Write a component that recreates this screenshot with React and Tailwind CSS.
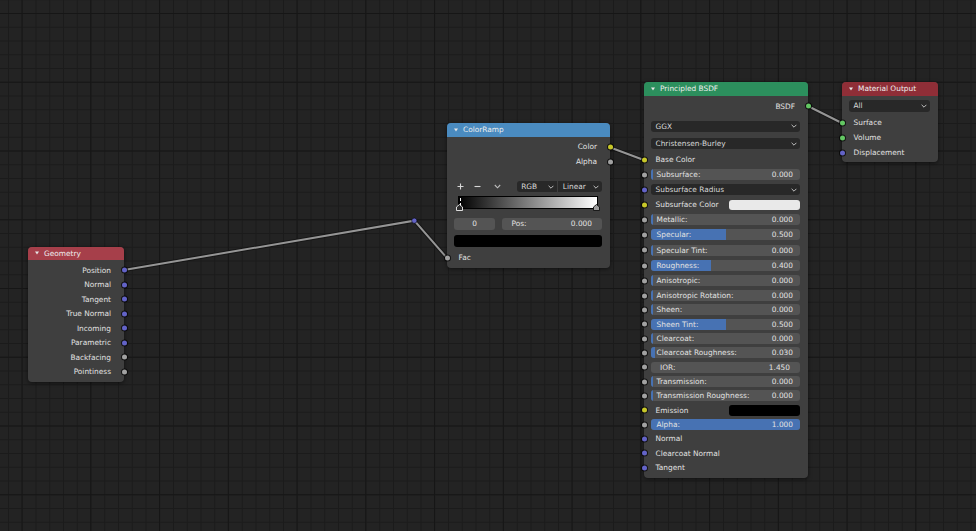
import React from 'react';

// socket colours used by Blender's node editor
const socketColor = {
  vector: 'bg-[#6363c7]',
  float: 'bg-[#a1a1a1]',
  color: 'bg-[#c7c729]',
  shader: 'bg-[#63c763]',
};

const Socket = ({ type, side }) => (
  <span
    className={`absolute top-1/2 -translate-y-1/2 w-[5px] h-[5px] rounded-full ring-1 ring-black/70 ${socketColor[type]} ${
      side === 'left' ? 'left-[-2.5px]' : 'right-[-2.5px]'
    }`}
  />
);

const Chevron = () => (
  <svg width="6" height="4" viewBox="0 0 6 4" className="shrink-0">
    <path d="M0.6 0.8 L3 3.2 L5.4 0.8" stroke="#d0d0d0" strokeWidth="0.9" fill="none" />
  </svg>
);

const Header = ({ color, title }) => (
  <div className={`h-[13.5px] rounded-t-[4px] flex items-center pl-[7px] text-[#eeeeee] ${color}`}>
    <svg width="4" height="4" viewBox="0 0 4 4" className="shrink-0">
      <path d="M0 0.6 H4 L2 3.4 Z" fill="#e6e6e6" />
    </svg>
    <span className="ml-[5px]">{title}</span>
  </div>
);

const Node = ({ pos, children }) => (
  <div
    className={`absolute rounded-[4px] bg-[#3f3f3f] shadow-[0_1px_4px_rgba(0,0,0,0.55)] font-['DejaVu_Sans',sans-serif] text-[7.4px] leading-none text-[#e2e2e2] ${pos}`}
  >
    {children}
  </div>
);

const OutRow = ({ label, type, h = 'h-[15px]' }) => (
  <div className={`relative flex items-center justify-end pr-[13px] ${h}`}>
    <span>{label}</span>
    <Socket type={type} side="right" />
  </div>
);

const Dropdown = ({ label, className = '' }) => (
  <div className={`flex items-center bg-[#282828] rounded-[3px] pl-[4.5px] pr-[3px] text-[#d8d8d8] ${className}`}>
    <span>{label}</span>
    <span className="ml-auto">
      <Chevron />
    </span>
  </div>
);

const Slider = ({ label, value, frac, ior }) => (
  <div className="relative h-[11px] w-full rounded-[3px] bg-[#545454] overflow-hidden flex items-center">
    {!ior && (
      <div
        className="absolute left-0 top-0 bottom-0 bg-[#4772b3]"
        style={{ width: frac === 0 ? '1.5px' : `${frac * 100}%` }}
      />
    )}
    <span className={`relative ${ior ? 'pl-[9px]' : 'pl-[5.5px]'}`}>{label}</span>
    <span className={`relative ml-auto ${ior ? 'pr-[10px]' : 'pr-[7px]'}`}>{value}</span>
  </div>
);

const geometryOutputs = [
  ['Position', 'vector'],
  ['Normal', 'vector'],
  ['Tangent', 'vector'],
  ['True Normal', 'vector'],
  ['Incoming', 'vector'],
  ['Parametric', 'vector'],
  ['Backfacing', 'float'],
  ['Pointiness', 'float'],
];

const bsdfInputs = [
  { label: 'Base Color', kind: 'plain', socket: 'color', h: 'h-[15px]' },
  { label: 'Subsurface:', kind: 'slider', value: '0.000', frac: 0, socket: 'float', h: 'h-[15px]' },
  { label: 'Subsurface Radius', kind: 'dropdown', socket: 'vector', h: 'h-[15px]' },
  { label: 'Subsurface Color', kind: 'swatch', swatch: 'bg-[#e9e9e9]', socket: 'color', h: 'h-[15px]' },
  { label: 'Metallic:', kind: 'slider', value: '0.000', frac: 0, socket: 'float', h: 'h-[15px]' },
  { label: 'Specular:', kind: 'slider', value: '0.500', frac: 0.5, socket: 'float', h: 'h-[15px]' },
  { label: 'Specular Tint:', kind: 'slider', value: '0.000', frac: 0, socket: 'float', h: 'h-[15.5px]' },
  { label: 'Roughness:', kind: 'slider', value: '0.400', frac: 0.4, socket: 'float', h: 'h-[15.5px]' },
  { label: 'Anisotropic:', kind: 'slider', value: '0.000', frac: 0, socket: 'float', h: 'h-[15px]' },
  { label: 'Anisotropic Rotation:', kind: 'slider', value: '0.000', frac: 0, socket: 'float', h: 'h-[14.33px]' },
  { label: 'Sheen:', kind: 'slider', value: '0.000', frac: 0, socket: 'float', h: 'h-[14.33px]' },
  { label: 'Sheen Tint:', kind: 'slider', value: '0.500', frac: 0.5, socket: 'float', h: 'h-[14.33px]' },
  { label: 'Clearcoat:', kind: 'slider', value: '0.000', frac: 0, socket: 'float', h: 'h-[14.33px]' },
  { label: 'Clearcoat Roughness:', kind: 'slider', value: '0.030', frac: 0.03, socket: 'float', h: 'h-[14.33px]' },
  { label: 'IOR:', kind: 'slider', value: '1.450', ior: true, socket: 'float', h: 'h-[14.33px]' },
  { label: 'Transmission:', kind: 'slider', value: '0.000', frac: 0, socket: 'float', h: 'h-[14.33px]' },
  { label: 'Transmission Roughness:', kind: 'slider', value: '0.000', frac: 0, socket: 'float', h: 'h-[14.33px]' },
  { label: 'Emission', kind: 'swatch', swatch: 'bg-[#000000]', socket: 'color', h: 'h-[14.33px]' },
  { label: 'Alpha:', kind: 'slider', value: '1.000', frac: 1, socket: 'float', h: 'h-[14.33px]' },
  { label: 'Normal', kind: 'plain', socket: 'vector', h: 'h-[14.33px]' },
  { label: 'Clearcoat Normal', kind: 'plain', socket: 'vector', h: 'h-[14.33px]' },
  { label: 'Tangent', kind: 'plain', socket: 'vector', h: 'h-[14.33px]' },
];

const InRow = ({ item }) => (
  <div className={`relative flex items-center pl-[7px] pr-[8px] ${item.h}`}>
    <Socket type={item.socket} side="left" />
    {item.kind === 'plain' && <span className="pl-[4.5px]">{item.label}</span>}
    {item.kind === 'slider' && (
      <Slider label={item.label} value={item.value} frac={item.frac} ior={item.ior} />
    )}
    {item.kind === 'dropdown' && <Dropdown label={item.label} className="w-full h-[11px]" />}
    {item.kind === 'swatch' && (
      <>
        <span className="pl-[4.5px]">{item.label}</span>
        <span className={`ml-auto w-[71px] h-[10.5px] rounded-[3px] ${item.swatch}`} />
      </>
    )}
  </div>
);

const Wires = () => (
  <svg className="absolute inset-0 pointer-events-none" width="976" height="531">
    <g stroke="#111" strokeOpacity="0.7" strokeWidth="4" fill="none" strokeLinecap="round">
      <polyline points="124,270 414.3,220.7 446.7,257.7" />
      <line x1="609.7" y1="147.3" x2="643.8" y2="160" />
      <line x1="807.8" y1="106" x2="841.8" y2="123" />
    </g>
    <g stroke="#959595" strokeWidth="2" fill="none" strokeLinecap="round">
      <polyline points="124,270 414.3,220.7 446.7,257.7" />
      <line x1="609.7" y1="147.3" x2="643.8" y2="160" />
      <line x1="807.8" y1="106" x2="841.8" y2="123" />
    </g>
    <circle cx="414.3" cy="220.7" r="2.6" fill="#6363c7" stroke="#000" strokeOpacity="0.7" strokeWidth="0.8" />
  </svg>
);

const RampHandle = ({ fill, stroke }) => (
  <svg width="7" height="7" viewBox="0 0 7 7">
    <path d="M0.5 3 L3.5 0.5 L6.5 3 V6.5 H0.5 Z" fill={fill} stroke={stroke} strokeWidth="0.9" />
  </svg>
);

export default function App() {
  return (
    <div className="relative w-[976px] h-[531px] overflow-hidden bg-[#232323] bg-[image:linear-gradient(to_right,#161616_1px,transparent_1px),linear-gradient(to_bottom,#161616_1px,transparent_1px),linear-gradient(to_right,#1b1b1b_1px,transparent_1px),linear-gradient(to_bottom,#1b1b1b_1px,transparent_1px)] bg-[size:68.75px_68.75px,68.75px_68.75px,13.75px_13.75px,13.75px_13.75px] bg-[position:21.5px_13px,21.5px_13px,8px_13px,8px_13px]">
      <Wires />

      {/* Geometry */}
      <Node pos="left-[28px] top-[246.5px] w-[96px]">
        <Header color="bg-[#a63f4a]" title="Geometry" />
        <div className="pt-[3px] pb-[2.5px]">
          {geometryOutputs.map(([label, type]) => (
            <OutRow key={label} label={label} type={type} h="h-[14.5px]" />
          ))}
        </div>
      </Node>

      {/* ColorRamp */}
      <Node pos="left-[447px] top-[123px] w-[163px]">
        <Header color="bg-[#4a8bc0]" title="ColorRamp" />
        <div className="pt-[3px] pb-[2.5px]">
          <OutRow label="Color" type="color" />
          <OutRow label="Alpha" type="float" />

          <div className="mt-[11.8px] h-[10.7px] flex items-center pl-[7px] pr-[8px]">
            <span className="w-[13px] flex justify-center">
              <svg width="7" height="7" viewBox="0 0 7 7">
                <path d="M3.5 0.5 V6.5 M0.5 3.5 H6.5" stroke="#d6d6d6" strokeWidth="1.1" />
              </svg>
            </span>
            <span className="ml-[4px] w-[13px] flex justify-center">
              <svg width="7" height="7" viewBox="0 0 7 7">
                <path d="M0.5 3.5 H6.5" stroke="#d6d6d6" strokeWidth="1.1" />
              </svg>
            </span>
            <span className="ml-[7px] w-[13px] flex justify-center">
              <svg width="7" height="5" viewBox="0 0 7 5">
                <path d="M0.8 1 L3.5 3.8 L6.2 1" stroke="#bdbdbd" strokeWidth="1.1" fill="none" />
              </svg>
            </span>
            <Dropdown label="RGB" className="ml-auto w-[40.3px] h-full rounded-r-none" />
            <Dropdown label="Linear" className="ml-[1.3px] w-[43.7px] h-full rounded-l-none" />
          </div>

          <div className="relative mt-[4.3px] ml-[11.3px] mr-[12.4px] h-[12.4px] border border-black bg-[linear-gradient(to_right,#000000,#ffffff)]">
            <span className="absolute left-[0.5px] top-[0.5px] h-[8px] border-l border-dashed border-white" />
            <span className="absolute left-[-3.5px] top-[7px]">
              <RampHandle fill="#2e2e2e" stroke="#f0f0f0" />
            </span>
            <span className="absolute right-[-3.5px] top-[7px]">
              <RampHandle fill="#9c9c9c" stroke="#111111" />
            </span>
          </div>

          <div className="mt-[9.3px] h-[11.7px] flex pl-[7px] pr-[8px]">
            <div className="w-[41px] rounded-[3px] bg-[#545454] flex items-center justify-center">0</div>
            <div className="ml-[7px] flex-1 rounded-[3px] bg-[#545454] flex items-center pl-[9.5px] pr-[10px]">
              <span>Pos:</span>
              <span className="ml-auto">0.000</span>
            </div>
          </div>

          <div className="mt-[5px] ml-[7px] mr-[8px] h-[12.3px] rounded-[3px] bg-black" />

          <div className="mt-[3.5px] relative h-[15px] flex items-center pl-[11.6px]">
            <Socket type="float" side="left" />
            <span>Fac</span>
          </div>
        </div>
      </Node>

      {/* Principled BSDF */}
      <Node pos="left-[644px] top-[82px] w-[164px]">
        <Header color="bg-[#2c8f5d]" title="Principled BSDF" />
        <div className="pt-[3.3px] pb-[3px]">
          <OutRow label="BSDF" type="shader" />
          <div className="mt-[6.9px] pl-[7px] pr-[8px]">
            <Dropdown label="GGX" className="h-[11.3px]" />
          </div>
          <div className="mt-[6px] pl-[7px] pr-[8px]">
            <Dropdown label="Christensen-Burley" className="h-[11.3px]" />
          </div>
          <div className="mt-[3.2px]">
            {bsdfInputs.map((item) => (
              <InRow key={item.label} item={item} />
            ))}
          </div>
        </div>
      </Node>

      {/* Material Output */}
      <Node pos="left-[842px] top-[82px] w-[96px]">
        <Header color="bg-[#8f2e37]" title="Material Output" />
        <div className="pt-[4.8px] pb-[2px]">
          <div className="pl-[7px] pr-[8.5px]">
            <Dropdown label="All" className="h-[11.7px]" />
          </div>
          <div className="mt-[3.5px]">
            {[
              ['Surface', 'shader'],
              ['Volume', 'shader'],
              ['Displacement', 'vector'],
            ].map(([label, type]) => (
              <div key={label} className="relative h-[15px] flex items-center pl-[11.6px]">
                <Socket type={type} side="left" />
                <span>{label}</span>
              </div>
            ))}
          </div>
        </div>
      </Node>
    </div>
  );
}
